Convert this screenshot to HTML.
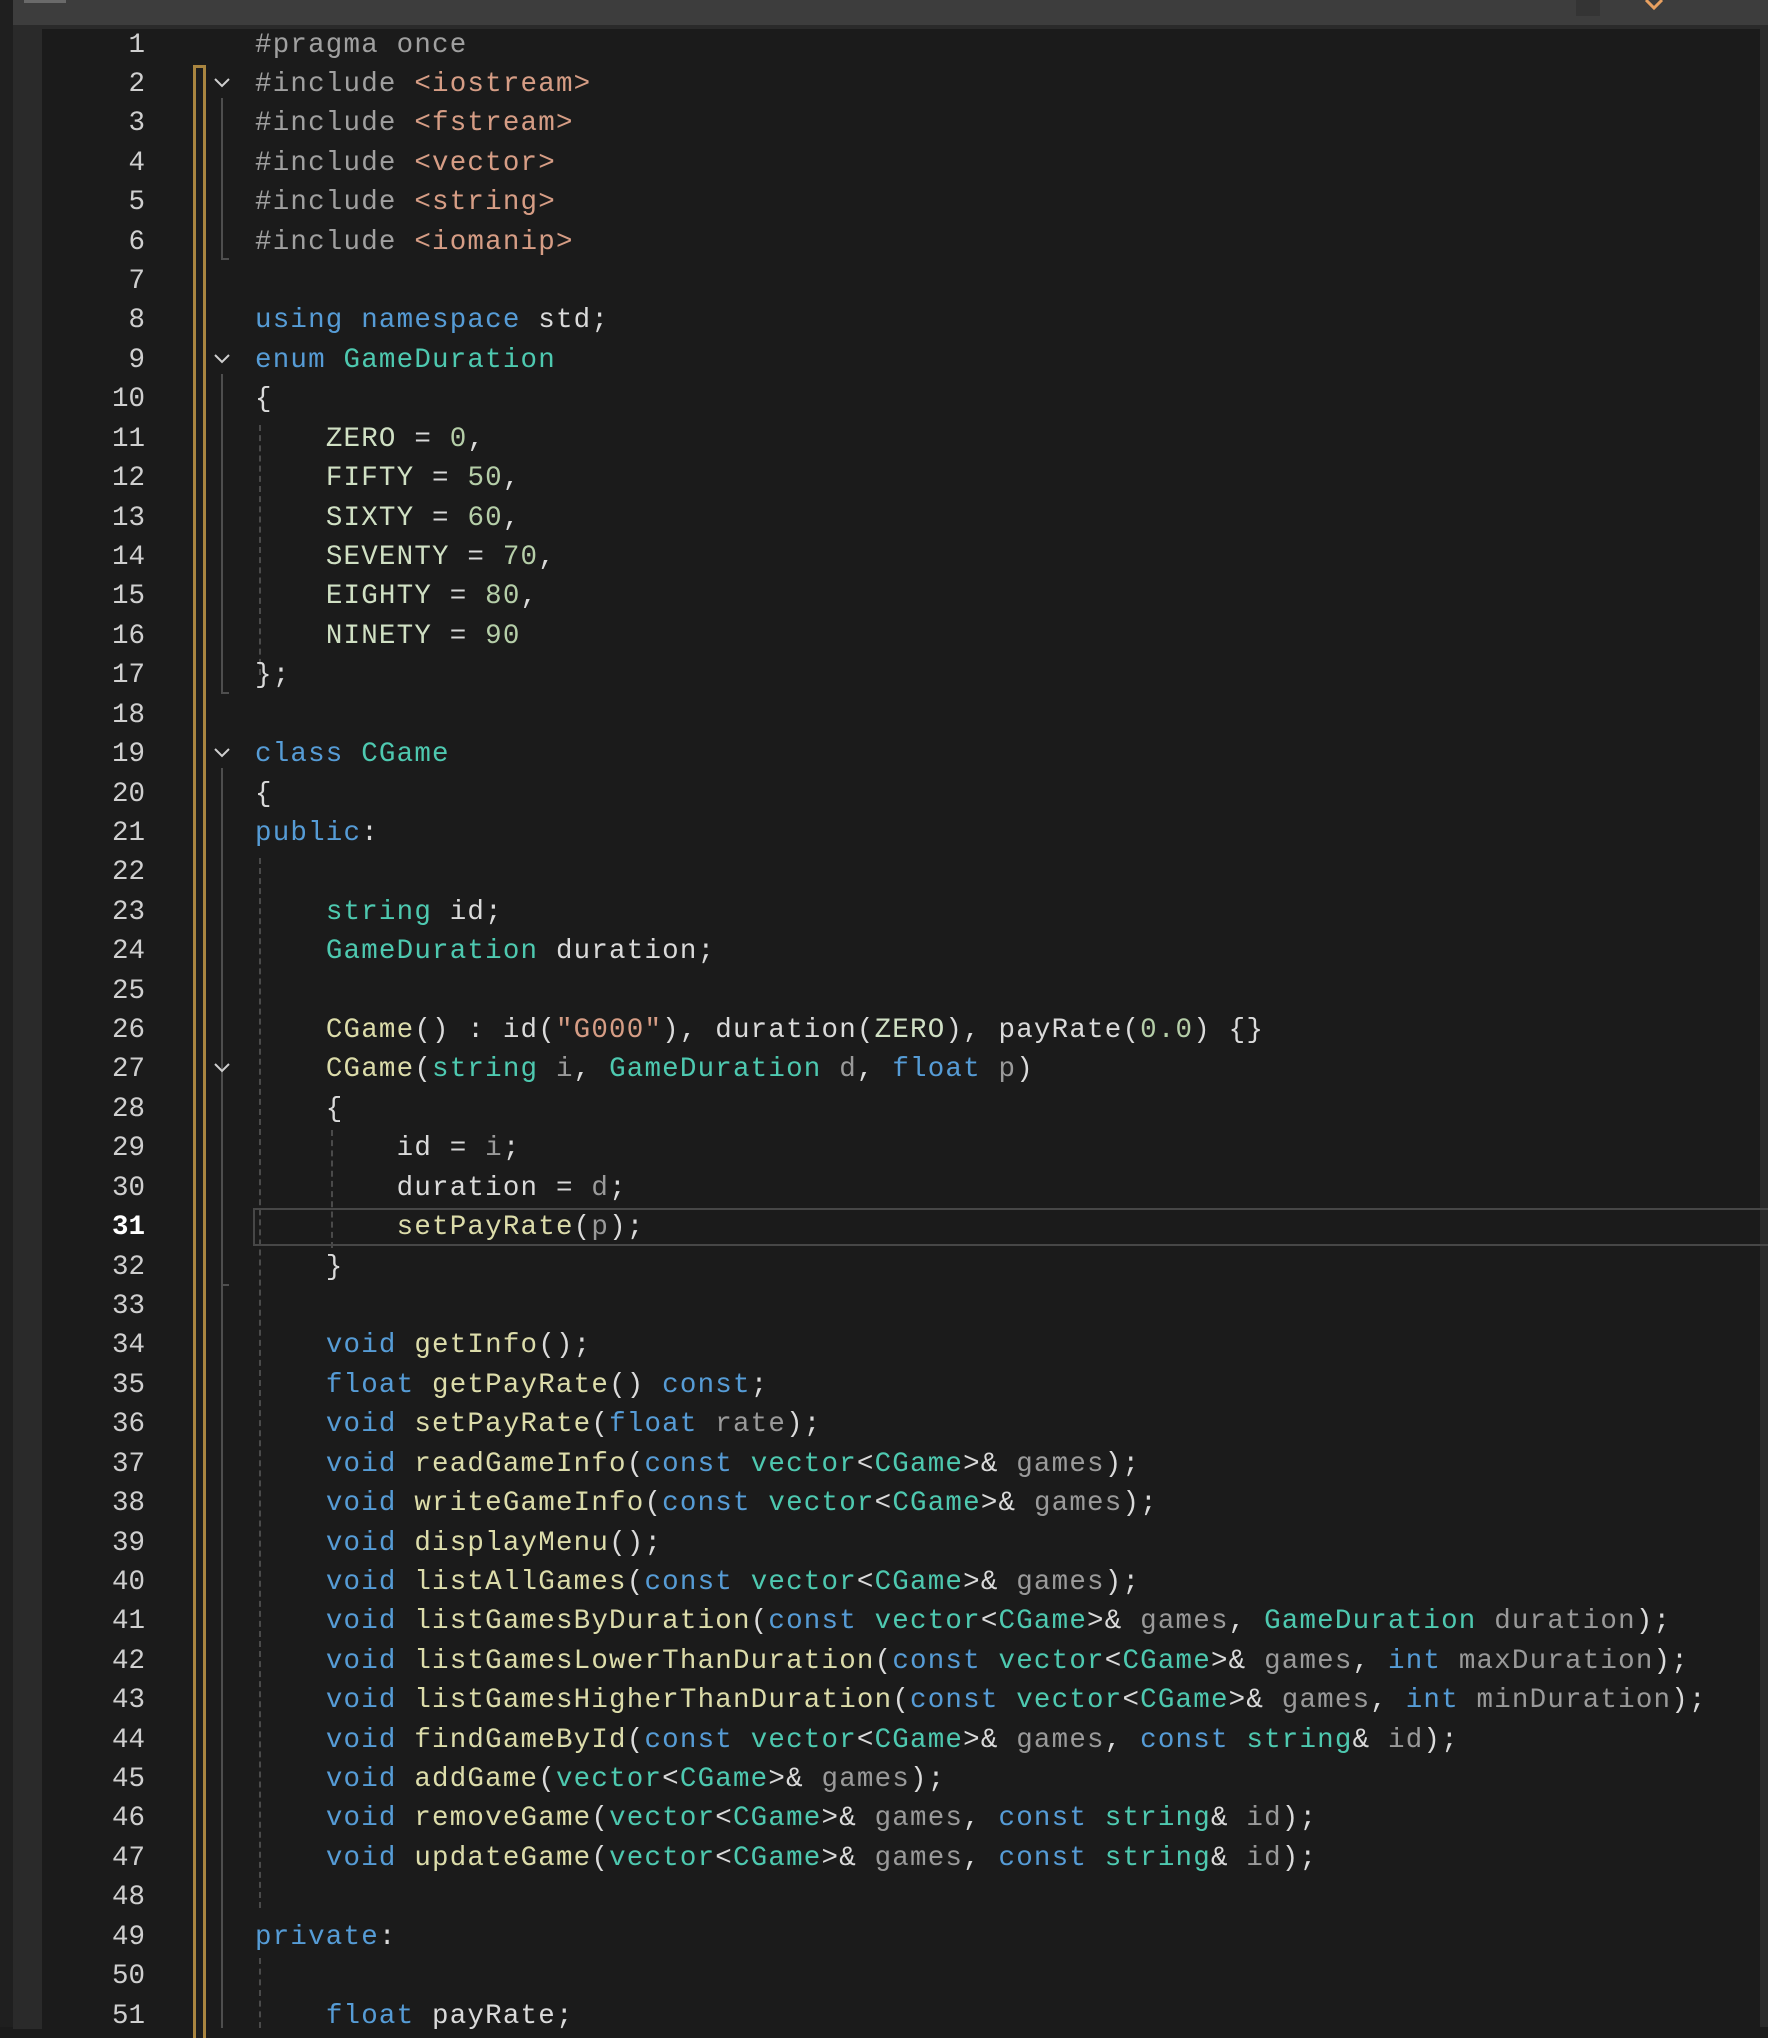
<!DOCTYPE html>
<html><head><meta charset="utf-8"><style>
html,body{margin:0;padding:0;width:1768px;height:2027px;overflow:hidden;background:#1b1b1b;}
.top{position:absolute;left:0;top:0;width:1768px;height:25px;background:#3d3d3d;}
.top2{position:absolute;left:0;top:25px;width:1768px;height:4px;background:#2a2a2a;}
.lstrip{position:absolute;left:0;top:0;width:13px;height:2027px;background:#1f1f1f;}
.gut{position:absolute;left:13px;top:29px;width:29px;height:2000px;background:#2a2a2a;}
.tab{position:absolute;left:24px;top:0;width:42px;height:3px;background:#6a6a6a;}
.gap{position:absolute;left:1576px;top:0;width:24px;height:16px;background:#343434;}
.sb{position:absolute;left:1760px;top:25px;width:8px;height:2002px;background:#2b2b2b;}
.nums{position:absolute;left:50px;top:25.5px;width:95px;text-align:right;}
.code{position:absolute;left:255px;top:25.5px;}
.nums div,.code div{height:39.43px;line-height:39.43px;white-space:pre;font-family:"Liberation Mono",monospace;font-size:27.5px;letter-spacing:1.2px;color:#dadada;}
.nums div{color:#cfcfcf;letter-spacing:0}
.nums .cur{color:#ffffff;font-weight:bold}
.k{color:#569cd6}.t{color:#4ec9b0}.f{color:#dcdcaa}.s{color:#d69d85}.n{color:#b5cea8}.p{color:#9a9a9a}.m{color:#a0a0a0}.e{color:#d0e0c4}
.ybar{position:absolute;left:193px;top:65px;width:7px;height:1970px;border-left:3px solid #a98540;border-right:3px solid #a98540;border-top:3px solid #a98540;background:#1e1e1e;}
.fl{position:absolute;width:2px;background:#4e4e4e;left:221px;}
.tk{position:absolute;height:2px;width:8px;background:#4e4e4e;left:221px;}
.ig{position:absolute;width:0;border-left:2px dashed #4a4a4a;}
.chev{position:absolute;left:212px;width:20px;height:14px;}
.hl{position:absolute;left:253px;top:1208px;width:1520px;height:34px;border:2px solid #474747;}
</style></head><body>
<div class="top"></div><div class="top2"></div><div class="tab"></div><div class="gap"></div>
<svg style="position:absolute;left:1643px;top:0" width="22" height="14"><path d="M3 0 L11 8 L19 0" stroke="#e8a060" stroke-width="3" fill="none"/></svg>
<div class="lstrip"></div><div class="gut"></div><div class="sb"></div>
<div class="ybar"></div>
<div class="fl" style="top:98px;height:160px"></div><div class="tk" style="top:258px"></div>
<div class="fl" style="top:374px;height:320px"></div><div class="tk" style="top:692px"></div>
<div class="fl" style="top:768px;height:1260px"></div>
<div class="tk" style="top:1284px"></div>
<div class="ig" style="left:259px;top:425px;height:250px"></div>
<div class="ig" style="left:259px;top:858px;height:1050px"></div>
<div class="ig" style="left:259px;top:1958px;height:70px"></div>
<div class="ig" style="left:331px;top:1130px;height:118px"></div>
<svg class="chev" style="top:76px"><path d="M3 3 L10 10 L17 3" stroke="#cfcfcf" stroke-width="2" fill="none"/></svg>
<svg class="chev" style="top:352px"><path d="M3 3 L10 10 L17 3" stroke="#cfcfcf" stroke-width="2" fill="none"/></svg>
<svg class="chev" style="top:746px"><path d="M3 3 L10 10 L17 3" stroke="#cfcfcf" stroke-width="2" fill="none"/></svg>
<svg class="chev" style="top:1061px"><path d="M3 3 L10 10 L17 3" stroke="#cfcfcf" stroke-width="2" fill="none"/></svg>
<div class="hl"></div>
<div class="nums">
<div>1</div><div>2</div><div>3</div><div>4</div><div>5</div><div>6</div><div>7</div><div>8</div><div>9</div><div>10</div>
<div>11</div><div>12</div><div>13</div><div>14</div><div>15</div><div>16</div><div>17</div><div>18</div><div>19</div><div>20</div>
<div>21</div><div>22</div><div>23</div><div>24</div><div>25</div><div>26</div><div>27</div><div>28</div><div>29</div><div>30</div>
<div class="cur">31</div><div>32</div><div>33</div><div>34</div><div>35</div><div>36</div><div>37</div><div>38</div><div>39</div><div>40</div>
<div>41</div><div>42</div><div>43</div><div>44</div><div>45</div><div>46</div><div>47</div><div>48</div><div>49</div><div>50</div><div>51</div>
</div>
<div class="code">
<div><span class="m">#pragma once</span></div>
<div><span class="m">#include</span> <span class="s">&lt;iostream&gt;</span></div>
<div><span class="m">#include</span> <span class="s">&lt;fstream&gt;</span></div>
<div><span class="m">#include</span> <span class="s">&lt;vector&gt;</span></div>
<div><span class="m">#include</span> <span class="s">&lt;string&gt;</span></div>
<div><span class="m">#include</span> <span class="s">&lt;iomanip&gt;</span></div>
<div> </div>
<div><span class="k">using namespace</span> std;</div>
<div><span class="k">enum</span> <span class="t">GameDuration</span></div>
<div>{</div>
<div>    <span class="e">ZERO</span> = <span class="n">0</span>,</div>
<div>    <span class="e">FIFTY</span> = <span class="n">50</span>,</div>
<div>    <span class="e">SIXTY</span> = <span class="n">60</span>,</div>
<div>    <span class="e">SEVENTY</span> = <span class="n">70</span>,</div>
<div>    <span class="e">EIGHTY</span> = <span class="n">80</span>,</div>
<div>    <span class="e">NINETY</span> = <span class="n">90</span></div>
<div>};</div>
<div> </div>
<div><span class="k">class</span> <span class="t">CGame</span></div>
<div>{</div>
<div><span class="k">public</span>:</div>
<div> </div>
<div>    <span class="t">string</span> id;</div>
<div>    <span class="t">GameDuration</span> duration;</div>
<div> </div>
<div>    <span class="f">CGame</span>() : id(<span class="s">"G000"</span>), duration(<span class="e">ZERO</span>), payRate(<span class="n">0.0</span>) {}</div>
<div>    <span class="f">CGame</span>(<span class="t">string</span> <span class="p">i</span>, <span class="t">GameDuration</span> <span class="p">d</span>, <span class="k">float</span> <span class="p">p</span>)</div>
<div>    {</div>
<div>        id = <span class="p">i</span>;</div>
<div>        duration = <span class="p">d</span>;</div>
<div>        <span class="f">setPayRate</span>(<span class="p">p</span>);</div>
<div>    }</div>
<div> </div>
<div>    <span class="k">void</span> <span class="f">getInfo</span>();</div>
<div>    <span class="k">float</span> <span class="f">getPayRate</span>() <span class="k">const</span>;</div>
<div>    <span class="k">void</span> <span class="f">setPayRate</span>(<span class="k">float</span> <span class="p">rate</span>);</div>
<div>    <span class="k">void</span> <span class="f">readGameInfo</span>(<span class="k">const</span> <span class="t">vector</span>&lt;<span class="t">CGame</span>&gt;&amp; <span class="p">games</span>);</div>
<div>    <span class="k">void</span> <span class="f">writeGameInfo</span>(<span class="k">const</span> <span class="t">vector</span>&lt;<span class="t">CGame</span>&gt;&amp; <span class="p">games</span>);</div>
<div>    <span class="k">void</span> <span class="f">displayMenu</span>();</div>
<div>    <span class="k">void</span> <span class="f">listAllGames</span>(<span class="k">const</span> <span class="t">vector</span>&lt;<span class="t">CGame</span>&gt;&amp; <span class="p">games</span>);</div>
<div>    <span class="k">void</span> <span class="f">listGamesByDuration</span>(<span class="k">const</span> <span class="t">vector</span>&lt;<span class="t">CGame</span>&gt;&amp; <span class="p">games</span>, <span class="t">GameDuration</span> <span class="p">duration</span>);</div>
<div>    <span class="k">void</span> <span class="f">listGamesLowerThanDuration</span>(<span class="k">const</span> <span class="t">vector</span>&lt;<span class="t">CGame</span>&gt;&amp; <span class="p">games</span>, <span class="k">int</span> <span class="p">maxDuration</span>);</div>
<div>    <span class="k">void</span> <span class="f">listGamesHigherThanDuration</span>(<span class="k">const</span> <span class="t">vector</span>&lt;<span class="t">CGame</span>&gt;&amp; <span class="p">games</span>, <span class="k">int</span> <span class="p">minDuration</span>);</div>
<div>    <span class="k">void</span> <span class="f">findGameById</span>(<span class="k">const</span> <span class="t">vector</span>&lt;<span class="t">CGame</span>&gt;&amp; <span class="p">games</span>, <span class="k">const</span> <span class="t">string</span>&amp; <span class="p">id</span>);</div>
<div>    <span class="k">void</span> <span class="f">addGame</span>(<span class="t">vector</span>&lt;<span class="t">CGame</span>&gt;&amp; <span class="p">games</span>);</div>
<div>    <span class="k">void</span> <span class="f">removeGame</span>(<span class="t">vector</span>&lt;<span class="t">CGame</span>&gt;&amp; <span class="p">games</span>, <span class="k">const</span> <span class="t">string</span>&amp; <span class="p">id</span>);</div>
<div>    <span class="k">void</span> <span class="f">updateGame</span>(<span class="t">vector</span>&lt;<span class="t">CGame</span>&gt;&amp; <span class="p">games</span>, <span class="k">const</span> <span class="t">string</span>&amp; <span class="p">id</span>);</div>
<div> </div>
<div><span class="k">private</span>:</div>
<div> </div>
<div>    <span class="k">float</span> payRate;</div>
</div>
</body></html>
